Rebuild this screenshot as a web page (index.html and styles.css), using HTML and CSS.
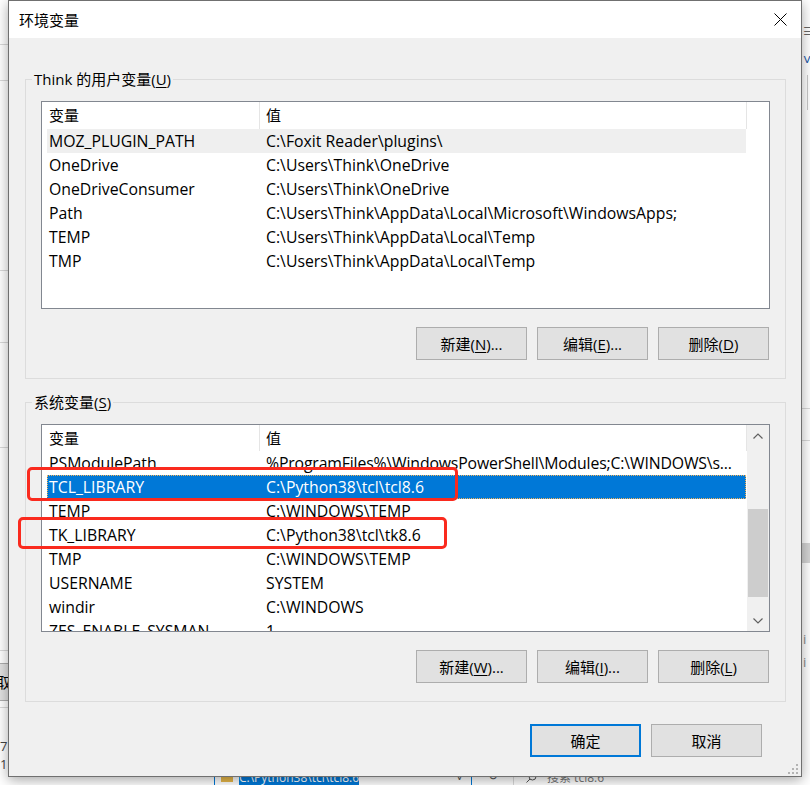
FILE: index.html
```html
<!DOCTYPE html>
<html lang="zh-CN">

<head>
    <meta charset="UTF-8">
    <meta name="viewport" content="width=device-width, initial-scale=1.0">
    <title>环境变量</title>
    <link rel="stylesheet" href="styles.css">
</head>

<body>
    <div id="desktop">
        <!-- 后面的资源管理器窗口（只露出边缘） -->
        <div class="backApp">
            <i class="bgLine" style="top:44px"></i>
            <i class="bgLine" style="top:80px"></i>
            <i class="bgLine" style="top:270px"></i>
            <i class="bgLine" style="top:342px"></i>
            <i class="bgLine" style="top:447px"></i>
            <i class="bgLine" style="top:650px"></i>
            <i class="bgLine" style="top:707px"></i>
            <span class="bgBtn">取</span>
            <span class="bgNum" style="top:740px">7</span>
            <span class="bgNum" style="top:758px">1</span>

            <span class="bgMenu">≡</span>
            <span class="bgArrow">˅</span>
            <i class="bgVLine"></i>
            <i class="bgLine bgRight" style="top:408px"></i>
            <i class="bgLine bgRight" style="top:440px"></i>
            <i class="bgBand"></i>
            <span class="bgTip" style="top:630px">i</span>
            <span class="bgTip" style="top:653px">i</span>

            <div class="addrBar">
                <div class="addrBox">
                    <i class="folder"></i>
                    <span class="addrSel">C:\Python38\tcl\tcl8.6</span>
                    <span class="addrDrop">˅</span>
                </div>
                <div class="refresh">↻</div>
                <div class="searchBox">
                    <svg width="11" height="11" viewBox="0 0 11 11">
                        <circle cx="6.5" cy="4.5" r="3.5" fill="none" stroke="#555" />
                        <path d="M4 7L0.5 10.5" stroke="#555" />
                    </svg>
                    <span>搜索 tcl8.6</span>
                </div>
            </div>
        </div>

        <div id="dialog">
            <div class="titleBar">
                <span class="title">环境变量</span>
                <a class="closeBtn" href="javascript:;">
                    <svg width="13" height="13" viewBox="0 0 13 13">
                        <path d="M0.5 0.5L12.5 12.5M12.5 0.5L0.5 12.5" stroke="#000" stroke-width="1" />
                    </svg>
                </a>
            </div>

            <div class="dialogBody">
                <fieldset class="group">
                    <legend>Think 的用户变量(<u>U</u>)</legend>
                    <div class="listView">
                        <div class="listMain">
                            <div class="listHead"><span>变量</span><span>值</span></div>
                            <ul class="listRows">
                                <li class="hot"><span>MOZ_PLUGIN_PATH</span><span>C:\Foxit Reader\plugins\</span></li>
                                <li><span>OneDrive</span><span>C:\Users\Think\OneDrive</span></li>
                                <li><span>OneDriveConsumer</span><span>C:\Users\Think\OneDrive</span></li>
                                <li><span>Path</span><span>C:\Users\Think\AppData\Local\Microsoft\WindowsApps;</span></li>
                                <li><span>TEMP</span><span>C:\Users\Think\AppData\Local\Temp</span></li>
                                <li><span>TMP</span><span>C:\Users\Think\AppData\Local\Temp</span></li>
                            </ul>
                        </div>
                    </div>
                    <div class="btnRow">
                        <button>新建(<u>N</u>)...</button>
                        <button>编辑(<u>E</u>)...</button>
                        <button>删除(<u>D</u>)</button>
                    </div>
                </fieldset>

                <fieldset class="group">
                    <legend>系统变量(<u>S</u>)</legend>
                    <div class="listView sys">
                        <div class="listMain">
                            <div class="listHead"><span>变量</span><span>值</span></div>
                            <ul class="listRows">
                                <li><span>PSModulePath</span><span class="trunc">%ProgramFiles%\WindowsPowerShell\Modules;C:\WINDOWS\s...</span></li>
                                <li class="selected"><span>TCL_LIBRARY</span><span>C:\Python38\tcl\tcl8.6</span></li>
                                <li><span>TEMP</span><span>C:\WINDOWS\TEMP</span></li>
                                <li><span>TK_LIBRARY</span><span>C:\Python38\tcl\tk8.6</span></li>
                                <li><span>TMP</span><span>C:\WINDOWS\TEMP</span></li>
                                <li><span>USERNAME</span><span>SYSTEM</span></li>
                                <li><span>windir</span><span>C:\WINDOWS</span></li>
                                <li><span>ZES_ENABLE_SYSMAN</span><span>1</span></li>
                            </ul>
                        </div>
                        <div class="scrollBar">
                            <span class="arrow">
                                <svg width="10" height="6" viewBox="0 0 10 6">
                                    <path d="M0.5 5.5L5 1L9.5 5.5" fill="none" stroke="#606060" stroke-width="1.2" />
                                </svg>
                            </span>
                            <div class="track"><i class="thumb"></i></div>
                            <span class="arrow">
                                <svg width="10" height="6" viewBox="0 0 10 6">
                                    <path d="M0.5 0.5L5 5L9.5 0.5" fill="none" stroke="#606060" stroke-width="1.2" />
                                </svg>
                            </span>
                        </div>
                    </div>
                    <div class="btnRow">
                        <button>新建(<u>W</u>)...</button>
                        <button>编辑(<u>I</u>)...</button>
                        <button>删除(<u>L</u>)</button>
                    </div>
                </fieldset>

                <div class="dialogBtns">
                    <button class="default">确定</button>
                    <button>取消</button>
                </div>
            </div>

            <svg class="grip" width="11" height="11" viewBox="0 0 11 11">
                <rect x="8" y="0" width="2" height="2" fill="#b4b4b4" />
                <rect x="4" y="4" width="2" height="2" fill="#b4b4b4" />
                <rect x="8" y="4" width="2" height="2" fill="#b4b4b4" />
                <rect x="0" y="8" width="2" height="2" fill="#b4b4b4" />
                <rect x="4" y="8" width="2" height="2" fill="#b4b4b4" />
                <rect x="8" y="8" width="2" height="2" fill="#b4b4b4" />
            </svg>
        </div>

        <!-- 红色标注框 -->
        <i class="mark mark1"></i>
        <i class="mark mark2"></i>
    </div>
</body>

</html>
```

FILE: styles.css
```css
body {
    margin: 0;
    background: #ffffff;
    font-family: "Open Sans", "Noto Sans CJK SC", sans-serif;
    font-size: 15px;
    color: #000000;
}

ul {
    margin: 0;
    padding: 0;
    list-style: none;
}

a {
    text-decoration: none;
}

u {
    text-underline-offset: 2px;
}

#desktop {
    position: relative;
    width: 810px;
    height: 785px;
    overflow: hidden;
    background: #ffffff;
}

/* 背景窗口的零碎部分 */
.backApp {
    position: absolute;
    inset: 0;
    font-size: 12px;
}

.bgLine {
    position: absolute;
    left: 0;
    width: 10px;
    height: 1px;
    background: #d9d9d9;
}

.bgLine.bgRight {
    left: 800px;
}

.bgBtn {
    position: absolute;
    left: -20px;
    top: 663px;
    width: 30px;
    height: 36px;
    line-height: 36px;
    text-align: right;
    background: #e1e1e1;
    border: 1px solid #adadad;
    font-size: 15px;
    overflow: hidden;
}

.bgNum {
    position: absolute;
    left: 0;
    color: #444444;
    font-size: 13px;
    line-height: 13px;
}

.bgMenu {
    position: absolute;
    left: 802px;
    top: 18px;
    color: #666666;
    font-size: 16px;
}

.bgArrow {
    position: absolute;
    left: 803px;
    top: 50px;
    color: #1e5aa8;
    font-size: 14px;
}

.bgVLine {
    position: absolute;
    left: 807px;
    top: 75px;
    width: 1px;
    height: 35px;
    background: #c8c8c8;
}

.bgBand {
    position: absolute;
    left: 800px;
    top: 543px;
    width: 10px;
    height: 20px;
    background: #d4d4d4;
}

.bgTip {
    position: absolute;
    left: 803px;
    color: #888888;
    font-size: 13px;
}

.addrBar {
    position: absolute;
    left: 214px;
    top: 764px;
    display: flex;
    height: 26px;
}

.addrBox {
    display: flex;
    align-items: center;
    gap: 6px;
    width: 250px;
    padding-left: 6px;
    border: 1px solid #0078d7;
    background: #ffffff;
}

.folder {
    width: 12px;
    height: 9px;
    background: #e8b84a;
}

.addrSel {
    background: #0078d7;
    color: #ffffff;
}

.addrDrop {
    margin-left: auto;
    margin-right: 8px;
    color: #555555;
}

.refresh {
    width: 41px;
    text-align: center;
    line-height: 24px;
    color: #555555;
    border-right: 1px solid #d9d9d9;
}

.searchBox {
    display: flex;
    align-items: center;
    gap: 10px;
    padding-left: 12px;
    color: #777777;
}

/* 对话框 */
#dialog {
    position: absolute;
    left: 8px;
    top: 0;
    width: 794px;
    box-sizing: border-box;
    border: 1px solid #707070;
    background: #f0f0f0;
    box-shadow: 0 3px 12px rgba(0, 0, 0, 0.35);
}

.titleBar {
    display: flex;
    align-items: center;
    justify-content: space-between;
    height: 37px;
    padding: 0 14px 0 10px;
    background: #ffffff;
}

.closeBtn {
    display: flex;
}

.dialogBody {
    padding: 31px 0 19px;
}

.group {
    margin: 0 15px 0 16px;
    padding: 12px 15px 18px;
    border: 1px solid #dcdcdc;
    min-width: 0;
}

.group + .group {
    margin-top: 13px;
}

.group legend {
    margin-left: -9px;
    padding: 0 2px;
    line-height: 20px;
}

.listView {
    display: flex;
    height: 208px;
    box-sizing: border-box;
    border: 1px solid #828790;
    background: #ffffff;
    overflow: hidden;
}

.listMain {
    flex: 1;
    overflow: hidden;
}

.listHead {
    display: flex;
    height: 27px;
    line-height: 27px;
}

.sys .listHead {
    height: 26px;
    line-height: 26px;
}

.listHead span {
    box-sizing: border-box;
    border-right: 1px solid #e5e5e5;
}

.listHead span:first-child {
    width: 218px;
    padding-left: 7px;
}

.listHead span:last-child {
    width: 487px;
    padding-left: 6px;
}

.listRows {
    font-size: 15.8px;
}

.listRows li {
    display: flex;
    width: 699px;
    height: 24px;
    line-height: 24px;
    margin-left: 5px;
    box-sizing: border-box;
    white-space: nowrap;
}

.listRows li span:first-child {
    width: 212px;
    padding-left: 2px;
    box-sizing: border-box;
}

.listRows li span:last-child {
    flex: 1;
    padding-left: 7px;
    overflow: hidden;
}

.listRows li span.trunc {
    letter-spacing: -0.15px;
}

.listRows li.hot {
    background: #efefef;
}

.listRows li.selected {
    background: #0078d7;
    color: #ffffff;
    outline: 1px dotted #f4b25a;
    outline-offset: -1px;
}

.scrollBar {
    display: flex;
    flex-direction: column;
    width: 22px;
    background: #f0f0f0;
}

.arrow {
    display: flex;
    align-items: center;
    justify-content: center;
    height: 21px;
}

.track {
    flex: 1;
}

.thumb {
    display: block;
    height: 88px;
    margin: 63px 1px 0;
    background: #cdcdcd;
}

.btnRow {
    display: flex;
    justify-content: flex-end;
    gap: 10px;
    margin-top: 18px;
    padding-right: 1px;
}

button {
    width: 111px;
    height: 33px;
    padding: 0;
    border: 1px solid #adadad;
    background: #e1e1e1;
    font-family: inherit;
    font-size: 15px;
    color: #000000;
}

button.default {
    border: 2px solid #0078d7;
}

.dialogBtns {
    display: flex;
    justify-content: flex-end;
    gap: 10px;
    margin-top: 22px;
    padding-right: 39px;
}

.grip {
    position: absolute;
    right: 2px;
    bottom: 1px;
}

/* 标注框 */
.mark {
    position: absolute;
    box-sizing: border-box;
    border: 3px solid #fa2a1e;
    border-radius: 5px;
}

.mark1 {
    left: 27px;
    top: 467px;
    width: 431px;
    height: 34px;
}

.mark2 {
    left: 18px;
    top: 517px;
    width: 429px;
    height: 32px;
}
```
